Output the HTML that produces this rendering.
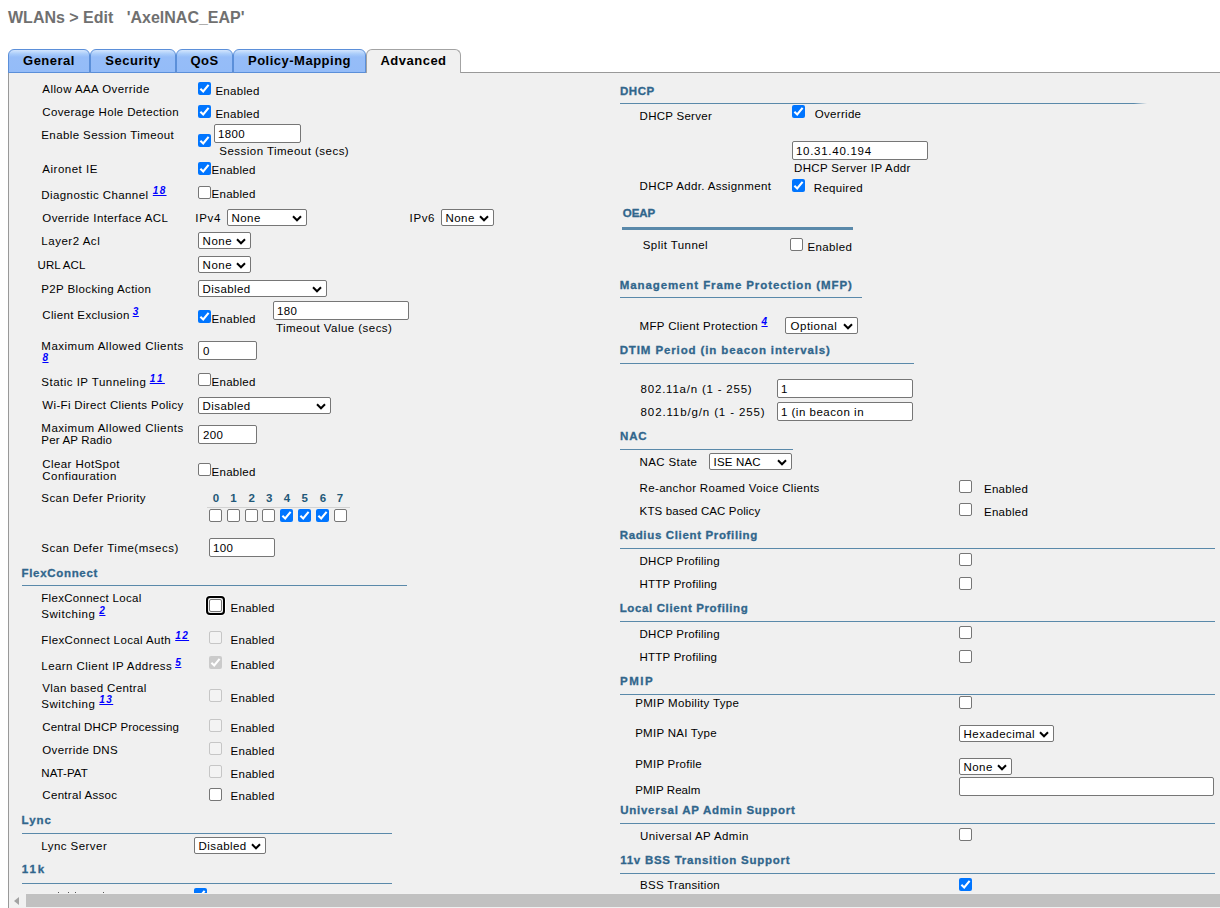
<!DOCTYPE html>
<html><head><meta charset="utf-8"><title>WLANs &gt; Edit</title>
<style>
html,body{margin:0;padding:0;background:#fff;}
body{width:1220px;height:908px;overflow:hidden;position:relative;font-family:"Liberation Sans",sans-serif;}
.t{position:absolute;white-space:nowrap;line-height:14px;font-family:"Liberation Sans",sans-serif}
.tab{position:absolute;top:49px;height:22px;border:1px solid #5b8fd9;border-top-left-radius:6px;border-top-right-radius:6px;
 background:linear-gradient(#d3e5fd 0px,#a9ccfa 4px,#96bdf8 7px,#94bcf8 100%);text-align:center;line-height:22px;
 font-family:"Liberation Sans",sans-serif;font-size:13px;font-weight:bold;letter-spacing:0.5px;color:#000;box-sizing:content-box}
.tab.act{background:#f0f0f0;border-color:#a3a3a3;border-bottom:none;height:23px;z-index:3}
#content{position:absolute;left:8px;top:72px;width:1212px;height:836px;background:#f0f0f0;border-left:1px solid #999;border-top:1px solid #999;box-sizing:border-box;overflow:hidden}
.cb{position:absolute;width:13px;height:13px;box-sizing:border-box;border-radius:2px}
.cb svg{position:absolute;left:0;top:0}
.cbc{background:#0075ff;}
.cbu{background:#fff;border:1px solid #767676}
.cbd{background:#f3f3f3;border:1px solid #c6c6c6}
.cbdc{background:#cbcbcb}
.ring{position:absolute;width:19px;height:19px;box-sizing:border-box;border:2px solid #000;border-radius:4px;box-shadow:0 0 0 1px #fff}
.sel,.inp{position:absolute;background:#fff;border:1px solid #767676;border-radius:2px}
.st{position:absolute;white-space:nowrap;line-height:14px;font-family:"Liberation Sans",sans-serif;font-size:11.5px;color:#000}
.chev{position:absolute;right:4px;width:10px;height:7px}
.chev svg{display:block}
.ln{position:absolute}
#sb{position:absolute;left:9px;top:893px;width:1211px;height:15px;background:#f1f1f1}
#thumb{position:absolute;left:17px;top:1px;width:1194px;height:13px;background:#c1c1c1}
</style></head><body>
<div id="content"></div>
<div class="tab" style="left:8px;width:80px">General</div>
<div class="tab" style="left:90px;width:84px">Security</div>
<div class="tab" style="left:176px;width:55px">QoS</div>
<div class="tab" style="left:233px;width:131px">Policy-Mapping</div>
<div class="tab act" style="left:366px;width:93px">Advanced</div>
<div class="t" style="left:8.00px;top:11px;font-size:16px;font-weight:bold;color:#707070;letter-spacing:0.000px">WLANs &gt; Edit &nbsp;&nbsp;'AxelNAC_EAP'</div>
<div class="t" style="left:42.30px;top:82px;font-size:11.5px;color:#000;letter-spacing:0.429px">Allow AAA Override</div>
<div class="t" style="left:215.40px;top:84px;font-size:11.5px;color:#000;letter-spacing:0.283px">Enabled</div>
<div class="t" style="left:42.30px;top:105px;font-size:11.5px;color:#000;letter-spacing:0.355px">Coverage Hole Detection</div>
<div class="t" style="left:215.40px;top:107px;font-size:11.5px;color:#000;letter-spacing:0.283px">Enabled</div>
<div class="t" style="left:41.30px;top:128px;font-size:11.5px;color:#000;letter-spacing:0.400px">Enable Session Timeout</div>
<div class="t" style="left:219.30px;top:144px;font-size:11.5px;color:#000;letter-spacing:0.471px">Session Timeout (secs)</div>
<div class="t" style="left:42.30px;top:162px;font-size:11.5px;color:#000;letter-spacing:0.511px">Aironet IE</div>
<div class="t" style="left:211.50px;top:163px;font-size:11.5px;color:#000;letter-spacing:0.283px">Enabled</div>
<div class="t" style="left:41.30px;top:188px;font-size:11.5px;color:#000;letter-spacing:0.412px">Diagnostic Channel</div>
<div class="t" style="left:152.80px;top:184px;font-size:10px;font-weight:bold;font-style:italic;text-decoration:underline;color:#0000ff;letter-spacing:1.300px">18</div>
<div class="t" style="left:211.50px;top:187px;font-size:11.5px;color:#000;letter-spacing:0.283px">Enabled</div>
<div class="t" style="left:42.30px;top:211px;font-size:11.5px;color:#000;letter-spacing:0.410px">Override Interface ACL</div>
<div class="t" style="left:195.30px;top:211px;font-size:11.5px;color:#000;letter-spacing:0.700px">IPv4</div>
<div class="t" style="left:409.60px;top:211px;font-size:11.5px;color:#000;letter-spacing:0.633px">IPv6</div>
<div class="t" style="left:41.30px;top:234px;font-size:11.5px;color:#000;letter-spacing:0.522px">Layer2 Acl</div>
<div class="t" style="left:37.60px;top:258px;font-size:11.5px;color:#000;letter-spacing:0.033px">URL ACL</div>
<div class="t" style="left:41.30px;top:282px;font-size:11.5px;color:#000;letter-spacing:0.378px">P2P Blocking Action</div>
<div class="t" style="left:42.30px;top:308px;font-size:11.5px;color:#000;letter-spacing:0.353px">Client Exclusion</div>
<div class="t" style="left:132.70px;top:305px;font-size:10px;font-weight:bold;font-style:italic;text-decoration:underline;color:#0000ff;letter-spacing:0.600px">3</div>
<div class="t" style="left:211.60px;top:312px;font-size:11.5px;color:#000;letter-spacing:0.283px">Enabled</div>
<div class="t" style="left:275.90px;top:321px;font-size:11.5px;color:#000;letter-spacing:0.453px">Timeout Value (secs)</div>
<div class="t" style="left:41.30px;top:339px;font-size:11.5px;color:#000;letter-spacing:0.500px">Maximum Allowed Clients</div>
<div class="t" style="left:42.40px;top:351px;font-size:10px;font-weight:bold;font-style:italic;text-decoration:underline;color:#0000ff;letter-spacing:0.600px">8</div>
<div class="t" style="left:41.30px;top:375px;font-size:11.5px;color:#000;letter-spacing:0.489px">Static IP Tunneling</div>
<div class="t" style="left:149.70px;top:372px;font-size:10px;font-weight:bold;font-style:italic;text-decoration:underline;color:#0000ff;letter-spacing:2.400px">11</div>
<div class="t" style="left:211.50px;top:375px;font-size:11.5px;color:#000;letter-spacing:0.283px">Enabled</div>
<div class="t" style="left:42.30px;top:398px;font-size:11.5px;color:#000;letter-spacing:0.338px">Wi-Fi Direct Clients Policy</div>
<div class="t" style="left:41.30px;top:421px;font-size:11.5px;color:#000;letter-spacing:0.500px">Maximum Allowed Clients</div>
<div class="t" style="left:41.30px;top:433px;font-size:11.5px;color:#000;letter-spacing:0.164px">Per AP Radio</div>
<div class="t" style="left:42.30px;top:457px;font-size:11.5px;color:#000;letter-spacing:0.408px">Clear HotSpot</div>
<div style="position:absolute;left:0;top:466px;width:400px;height:14px;overflow:hidden"><div class="t" style="left:42.30px;top:3px;font-size:11.5px;color:#000;letter-spacing:0.467px">Configuration</div></div>
<div class="t" style="left:211.50px;top:465px;font-size:11.5px;color:#000;letter-spacing:0.283px">Enabled</div>
<div class="t" style="left:41.30px;top:491px;font-size:11.5px;color:#000;letter-spacing:0.433px">Scan Defer Priority</div>
<div class="t" style="left:41.30px;top:541px;font-size:11.5px;color:#000;letter-spacing:0.495px">Scan Defer Time(msecs)</div>
<div class="t" style="left:21.50px;top:566px;font-size:11.5px;font-weight:bold;color:#31668c;-webkit-text-stroke:0.3px #31668c;letter-spacing:0.680px">FlexConnect</div>
<div class="t" style="left:41.30px;top:591px;font-size:11.5px;color:#000;letter-spacing:0.294px">FlexConnect Local</div>
<div class="t" style="left:41.30px;top:607px;font-size:11.5px;color:#000;letter-spacing:0.537px">Switching</div>
<div class="t" style="left:99.30px;top:604px;font-size:10px;font-weight:bold;font-style:italic;text-decoration:underline;color:#0000ff;letter-spacing:0.600px">2</div>
<div class="t" style="left:230.50px;top:601px;font-size:11.5px;color:#000;letter-spacing:0.283px">Enabled</div>
<div class="t" style="left:41.30px;top:633px;font-size:11.5px;color:#000;letter-spacing:0.381px">FlexConnect Local Auth</div>
<div class="t" style="left:175.20px;top:629px;font-size:10px;font-weight:bold;font-style:italic;text-decoration:underline;color:#0000ff;letter-spacing:1.400px">12</div>
<div class="t" style="left:230.50px;top:633px;font-size:11.5px;color:#000;letter-spacing:0.283px">Enabled</div>
<div class="t" style="left:41.30px;top:659px;font-size:11.5px;color:#000;letter-spacing:0.445px">Learn Client IP Address</div>
<div class="t" style="left:175.20px;top:656px;font-size:10px;font-weight:bold;font-style:italic;text-decoration:underline;color:#0000ff;letter-spacing:0.600px">5</div>
<div class="t" style="left:230.50px;top:658px;font-size:11.5px;color:#000;letter-spacing:0.283px">Enabled</div>
<div class="t" style="left:42.30px;top:681px;font-size:11.5px;color:#000;letter-spacing:0.365px">Vlan based Central</div>
<div class="t" style="left:41.30px;top:697px;font-size:11.5px;color:#000;letter-spacing:0.537px">Switching</div>
<div class="t" style="left:99.30px;top:693px;font-size:10px;font-weight:bold;font-style:italic;text-decoration:underline;color:#0000ff;letter-spacing:1.400px">13</div>
<div class="t" style="left:230.50px;top:691px;font-size:11.5px;color:#000;letter-spacing:0.283px">Enabled</div>
<div class="t" style="left:42.30px;top:720px;font-size:11.5px;color:#000;letter-spacing:0.177px">Central DHCP Processing</div>
<div class="t" style="left:230.50px;top:721px;font-size:11.5px;color:#000;letter-spacing:0.283px">Enabled</div>
<div class="t" style="left:42.30px;top:743px;font-size:11.5px;color:#000;letter-spacing:0.345px">Override DNS</div>
<div class="t" style="left:230.50px;top:744px;font-size:11.5px;color:#000;letter-spacing:0.283px">Enabled</div>
<div class="t" style="left:41.30px;top:766px;font-size:11.5px;color:#000;letter-spacing:0.067px">NAT-PAT</div>
<div class="t" style="left:230.50px;top:767px;font-size:11.5px;color:#000;letter-spacing:0.283px">Enabled</div>
<div class="t" style="left:42.30px;top:788px;font-size:11.5px;color:#000;letter-spacing:0.317px">Central Assoc</div>
<div class="t" style="left:230.50px;top:789px;font-size:11.5px;color:#000;letter-spacing:0.283px">Enabled</div>
<div class="t" style="left:21.50px;top:813px;font-size:11.5px;font-weight:bold;color:#31668c;-webkit-text-stroke:0.3px #31668c;letter-spacing:1.033px">Lync</div>
<div class="t" style="left:41.30px;top:839px;font-size:11.5px;color:#000;letter-spacing:0.450px">Lync Server</div>
<div class="t" style="left:21.80px;top:862px;font-size:11.5px;font-weight:bold;color:#31668c;-webkit-text-stroke:0.3px #31668c;letter-spacing:1.900px">11k</div>
<div class="t" style="left:620.10px;top:84px;font-size:11.5px;font-weight:bold;color:#31668c;-webkit-text-stroke:0.3px #31668c;letter-spacing:0.467px">DHCP</div>
<div class="t" style="left:639.60px;top:109px;font-size:11.5px;color:#000;letter-spacing:0.270px">DHCP Server</div>
<div class="t" style="left:814.80px;top:107px;font-size:11.5px;color:#000;letter-spacing:0.300px">Override</div>
<div class="t" style="left:794.00px;top:161px;font-size:11.5px;color:#000;letter-spacing:0.350px">DHCP Server IP Addr</div>
<div class="t" style="left:639.60px;top:179px;font-size:11.5px;color:#000;letter-spacing:0.340px">DHCP Addr. Assignment</div>
<div class="t" style="left:813.80px;top:181px;font-size:11.5px;color:#000;letter-spacing:0.300px">Required</div>
<div class="t" style="left:622.80px;top:206px;font-size:11.5px;font-weight:bold;color:#31668c;-webkit-text-stroke:0.3px #31668c;letter-spacing:-0.067px">OEAP</div>
<div class="t" style="left:642.70px;top:238px;font-size:11.5px;color:#000;letter-spacing:0.445px">Split Tunnel</div>
<div class="t" style="left:807.60px;top:240px;font-size:11.5px;color:#000;letter-spacing:0.350px">Enabled</div>
<div class="t" style="left:619.70px;top:278px;font-size:11.5px;font-weight:bold;color:#31668c;-webkit-text-stroke:0.3px #31668c;letter-spacing:0.906px">Management Frame Protection (MFP)</div>
<div class="t" style="left:639.60px;top:319px;font-size:11.5px;color:#000;letter-spacing:0.320px">MFP Client Protection</div>
<div class="t" style="left:761.50px;top:315px;font-size:10px;font-weight:bold;font-style:italic;text-decoration:underline;color:#0000ff;letter-spacing:0.600px">4</div>
<div class="t" style="left:619.70px;top:343px;font-size:11.5px;font-weight:bold;color:#31668c;-webkit-text-stroke:0.3px #31668c;letter-spacing:0.878px">DTIM Period (in beacon intervals)</div>
<div class="t" style="left:640.60px;top:382px;font-size:11.5px;color:#000;letter-spacing:0.783px">802.11a/n (1 - 255)</div>
<div class="t" style="left:640.60px;top:405px;font-size:11.5px;color:#000;letter-spacing:0.870px">802.11b/g/n (1 - 255)</div>
<div class="t" style="left:620.10px;top:429px;font-size:11.5px;font-weight:bold;color:#31668c;-webkit-text-stroke:0.3px #31668c;letter-spacing:0.800px">NAC</div>
<div class="t" style="left:639.60px;top:455px;font-size:11.5px;color:#000;letter-spacing:0.375px">NAC State</div>
<div class="t" style="left:639.60px;top:481px;font-size:11.5px;color:#000;letter-spacing:0.334px">Re-anchor Roamed Voice Clients</div>
<div class="t" style="left:984.00px;top:482px;font-size:11.5px;color:#000;letter-spacing:0.267px">Enabled</div>
<div class="t" style="left:639.60px;top:504px;font-size:11.5px;color:#000;letter-spacing:0.121px">KTS based CAC Policy</div>
<div class="t" style="left:984.00px;top:505px;font-size:11.5px;color:#000;letter-spacing:0.267px">Enabled</div>
<div class="t" style="left:619.70px;top:528px;font-size:11.5px;font-weight:bold;color:#31668c;-webkit-text-stroke:0.3px #31668c;letter-spacing:0.650px">Radius Client Profiling</div>
<div class="t" style="left:639.60px;top:554px;font-size:11.5px;color:#000;letter-spacing:0.223px">DHCP Profiling</div>
<div class="t" style="left:639.60px;top:577px;font-size:11.5px;color:#000;letter-spacing:0.215px">HTTP Profiling</div>
<div class="t" style="left:619.70px;top:601px;font-size:11.5px;font-weight:bold;color:#31668c;-webkit-text-stroke:0.3px #31668c;letter-spacing:0.624px">Local Client Profiling</div>
<div class="t" style="left:639.60px;top:627px;font-size:11.5px;color:#000;letter-spacing:0.223px">DHCP Profiling</div>
<div class="t" style="left:639.60px;top:650px;font-size:11.5px;color:#000;letter-spacing:0.215px">HTTP Profiling</div>
<div class="t" style="left:620.00px;top:674px;font-size:11.5px;font-weight:bold;color:#31668c;-webkit-text-stroke:0.3px #31668c;letter-spacing:1.500px">PMIP</div>
<div class="t" style="left:635.20px;top:696px;font-size:11.5px;color:#000;letter-spacing:0.341px">PMIP Mobility Type</div>
<div class="t" style="left:635.20px;top:726px;font-size:11.5px;color:#000;letter-spacing:0.267px">PMIP NAI Type</div>
<div class="t" style="left:635.20px;top:757px;font-size:11.5px;color:#000;letter-spacing:0.255px">PMIP Profile</div>
<div class="t" style="left:635.20px;top:783px;font-size:11.5px;color:#000;letter-spacing:0.089px">PMIP Realm</div>
<div class="t" style="left:620.20px;top:803px;font-size:11.5px;font-weight:bold;color:#31668c;-webkit-text-stroke:0.3px #31668c;letter-spacing:0.744px">Universal AP Admin Support</div>
<div class="t" style="left:640.00px;top:829px;font-size:11.5px;color:#000;letter-spacing:0.441px">Universal AP Admin</div>
<div class="t" style="left:620.20px;top:853px;font-size:11.5px;font-weight:bold;color:#31668c;-webkit-text-stroke:0.3px #31668c;letter-spacing:0.740px">11v BSS Transition Support</div>
<div class="t" style="left:640.00px;top:878px;font-size:11.5px;color:#000;letter-spacing:0.285px">BSS Transition</div>
<div class="cb cbc" style="left:198px;top:82px"><svg width="13" height="13" viewBox="0 0 13 13"><path d="M2.4 6.7 L5.2 9.4 L10.6 2.8" fill="none" stroke="#fff" stroke-width="2.1"/></svg></div>
<div class="cb cbc" style="left:198px;top:105px"><svg width="13" height="13" viewBox="0 0 13 13"><path d="M2.4 6.7 L5.2 9.4 L10.6 2.8" fill="none" stroke="#fff" stroke-width="2.1"/></svg></div>
<div class="cb cbc" style="left:198px;top:134px"><svg width="13" height="13" viewBox="0 0 13 13"><path d="M2.4 6.7 L5.2 9.4 L10.6 2.8" fill="none" stroke="#fff" stroke-width="2.1"/></svg></div>
<div class="cb cbc" style="left:198px;top:162px"><svg width="13" height="13" viewBox="0 0 13 13"><path d="M2.4 6.7 L5.2 9.4 L10.6 2.8" fill="none" stroke="#fff" stroke-width="2.1"/></svg></div>
<div class="cb cbu" style="left:198px;top:186px"></div>
<div class="cb cbc" style="left:198px;top:310px"><svg width="13" height="13" viewBox="0 0 13 13"><path d="M2.4 6.7 L5.2 9.4 L10.6 2.8" fill="none" stroke="#fff" stroke-width="2.1"/></svg></div>
<div class="cb cbu" style="left:198px;top:373px"></div>
<div class="cb cbu" style="left:198px;top:463px"></div>
<div class="cb cbu" style="left:209px;top:509px"></div>
<div class="cb cbu" style="left:227px;top:509px"></div>
<div class="cb cbu" style="left:245px;top:509px"></div>
<div class="cb cbu" style="left:262px;top:509px"></div>
<div class="cb cbc" style="left:280px;top:509px"><svg width="13" height="13" viewBox="0 0 13 13"><path d="M2.4 6.7 L5.2 9.4 L10.6 2.8" fill="none" stroke="#fff" stroke-width="2.1"/></svg></div>
<div class="cb cbc" style="left:298px;top:509px"><svg width="13" height="13" viewBox="0 0 13 13"><path d="M2.4 6.7 L5.2 9.4 L10.6 2.8" fill="none" stroke="#fff" stroke-width="2.1"/></svg></div>
<div class="cb cbc" style="left:316px;top:509px"><svg width="13" height="13" viewBox="0 0 13 13"><path d="M2.4 6.7 L5.2 9.4 L10.6 2.8" fill="none" stroke="#fff" stroke-width="2.1"/></svg></div>
<div class="cb cbu" style="left:334px;top:509px"></div>
<div class="ring" style="left:206px;top:596px"></div>
<div class="cb cbu" style="left:209px;top:599px"></div>
<div class="cb cbd" style="left:209px;top:631px"></div>
<div class="cb cbdc" style="left:209px;top:656px"><svg width="13" height="13" viewBox="0 0 13 13"><path d="M2.4 6.7 L5.2 9.4 L10.6 2.8" fill="none" stroke="#fff" stroke-width="2.1"/></svg></div>
<div class="cb cbd" style="left:209px;top:689px"></div>
<div class="cb cbd" style="left:209px;top:719px"></div>
<div class="cb cbd" style="left:209px;top:742px"></div>
<div class="cb cbd" style="left:209px;top:765px"></div>
<div class="cb cbu" style="left:209px;top:788px"></div>
<div class="cb cbc" style="left:194px;top:888px"><svg width="13" height="13" viewBox="0 0 13 13"><path d="M2.4 6.7 L5.2 9.4 L10.6 2.8" fill="none" stroke="#fff" stroke-width="2.1"/></svg></div>
<div class="cb cbc" style="left:792px;top:105px"><svg width="13" height="13" viewBox="0 0 13 13"><path d="M2.4 6.7 L5.2 9.4 L10.6 2.8" fill="none" stroke="#fff" stroke-width="2.1"/></svg></div>
<div class="cb cbc" style="left:792px;top:179px"><svg width="13" height="13" viewBox="0 0 13 13"><path d="M2.4 6.7 L5.2 9.4 L10.6 2.8" fill="none" stroke="#fff" stroke-width="2.1"/></svg></div>
<div class="cb cbu" style="left:790px;top:238px"></div>
<div class="cb cbu" style="left:959px;top:480px"></div>
<div class="cb cbu" style="left:959px;top:503px"></div>
<div class="cb cbu" style="left:959px;top:553px"></div>
<div class="cb cbu" style="left:959px;top:577px"></div>
<div class="cb cbu" style="left:959px;top:626px"></div>
<div class="cb cbu" style="left:959px;top:650px"></div>
<div class="cb cbu" style="left:959px;top:696px"></div>
<div class="cb cbu" style="left:959px;top:828px"></div>
<div class="cb cbc" style="left:959px;top:878px"><svg width="13" height="13" viewBox="0 0 13 13"><path d="M2.4 6.7 L5.2 9.4 L10.6 2.8" fill="none" stroke="#fff" stroke-width="2.1"/></svg></div>
<div class="sel" style="left:227px;top:209px;width:78px;height:15px"><div class="st" style="left:3.60px;top:1px;letter-spacing:0.400px">None</div><div class="chev" style="top:4.5px"><svg width="10" height="7" viewBox="0 0 10 7"><path d="M1 1.3 L5 5.3 L9 1.3" fill="none" stroke="#000" stroke-width="2"/></svg></div></div>
<div class="sel" style="left:441px;top:209px;width:51px;height:15px"><div class="st" style="left:3.60px;top:1px;letter-spacing:0.400px">None</div><div class="chev" style="top:4.5px"><svg width="10" height="7" viewBox="0 0 10 7"><path d="M1 1.3 L5 5.3 L9 1.3" fill="none" stroke="#000" stroke-width="2"/></svg></div></div>
<div class="sel" style="left:198px;top:232px;width:51px;height:15px"><div class="st" style="left:3.60px;top:1px;letter-spacing:0.533px">None</div><div class="chev" style="top:4.5px"><svg width="10" height="7" viewBox="0 0 10 7"><path d="M1 1.3 L5 5.3 L9 1.3" fill="none" stroke="#000" stroke-width="2"/></svg></div></div>
<div class="sel" style="left:198px;top:256px;width:51px;height:15px"><div class="st" style="left:3.60px;top:1px;letter-spacing:0.533px">None</div><div class="chev" style="top:4.5px"><svg width="10" height="7" viewBox="0 0 10 7"><path d="M1 1.3 L5 5.3 L9 1.3" fill="none" stroke="#000" stroke-width="2"/></svg></div></div>
<div class="sel" style="left:198px;top:280px;width:127px;height:15px"><div class="st" style="left:3.60px;top:1px;letter-spacing:0.400px">Disabled</div><div class="chev" style="top:4.5px"><svg width="10" height="7" viewBox="0 0 10 7"><path d="M1 1.3 L5 5.3 L9 1.3" fill="none" stroke="#000" stroke-width="2"/></svg></div></div>
<div class="sel" style="left:198px;top:397px;width:131px;height:15px"><div class="st" style="left:3.60px;top:1px;letter-spacing:0.400px">Disabled</div><div class="chev" style="top:4.5px"><svg width="10" height="7" viewBox="0 0 10 7"><path d="M1 1.3 L5 5.3 L9 1.3" fill="none" stroke="#000" stroke-width="2"/></svg></div></div>
<div class="sel" style="left:194px;top:837px;width:70px;height:15px"><div class="st" style="left:3.60px;top:1px;letter-spacing:0.400px">Disabled</div><div class="chev" style="top:4.5px"><svg width="10" height="7" viewBox="0 0 10 7"><path d="M1 1.3 L5 5.3 L9 1.3" fill="none" stroke="#000" stroke-width="2"/></svg></div></div>
<div class="sel" style="left:785px;top:317px;width:71px;height:15px"><div class="st" style="left:4.60px;top:1px;letter-spacing:0.471px">Optional</div><div class="chev" style="top:4.5px"><svg width="10" height="7" viewBox="0 0 10 7"><path d="M1 1.3 L5 5.3 L9 1.3" fill="none" stroke="#000" stroke-width="2"/></svg></div></div>
<div class="sel" style="left:709px;top:453px;width:81px;height:15px"><div class="st" style="left:3.60px;top:1px;letter-spacing:0.150px">ISE NAC</div><div class="chev" style="top:4.5px"><svg width="10" height="7" viewBox="0 0 10 7"><path d="M1 1.3 L5 5.3 L9 1.3" fill="none" stroke="#000" stroke-width="2"/></svg></div></div>
<div class="sel" style="left:959px;top:725px;width:93px;height:15px"><div class="st" style="left:3.60px;top:1px;letter-spacing:0.460px">Hexadecimal</div><div class="chev" style="top:4.5px"><svg width="10" height="7" viewBox="0 0 10 7"><path d="M1 1.3 L5 5.3 L9 1.3" fill="none" stroke="#000" stroke-width="2"/></svg></div></div>
<div class="sel" style="left:959px;top:758px;width:51px;height:15px"><div class="st" style="left:3.60px;top:1px;letter-spacing:0.400px">None</div><div class="chev" style="top:4.5px"><svg width="10" height="7" viewBox="0 0 10 7"><path d="M1 1.3 L5 5.3 L9 1.3" fill="none" stroke="#000" stroke-width="2"/></svg></div></div>
<div class="inp" style="left:214px;top:124px;width:85px;height:17px"><div class="st" style="left:2.90px;top:2px;letter-spacing:0.400px">1800</div></div>
<div class="inp" style="left:273px;top:301px;width:134px;height:17px"><div class="st" style="left:2.90px;top:2px;letter-spacing:0.400px">180</div></div>
<div class="inp" style="left:198px;top:341px;width:57px;height:17px"><div class="st" style="left:3.90px;top:2px;letter-spacing:0.400px">0</div></div>
<div class="inp" style="left:198px;top:425px;width:57px;height:17px"><div class="st" style="left:3.90px;top:2px;letter-spacing:0.400px">200</div></div>
<div class="inp" style="left:209px;top:538px;width:64px;height:17px"><div class="st" style="left:2.90px;top:2px;letter-spacing:0.400px">100</div></div>
<div class="inp" style="left:792px;top:141px;width:134px;height:17px"><div class="st" style="left:2.90px;top:2px;letter-spacing:0.736px">10.31.40.194</div></div>
<div class="inp" style="left:777px;top:379px;width:134px;height:17px"><div class="st" style="left:2.90px;top:2px;letter-spacing:0.400px">1</div></div>
<div class="inp" style="left:777px;top:402px;width:134px;height:17px"><div class="st" style="left:2.90px;top:2px;letter-spacing:0.514px">1 (in beacon in</div></div>
<div class="inp" style="left:959px;top:777px;width:253px;height:17px"><div class="st" style="left:3.90px;top:2px;letter-spacing:0.400px"></div></div>
<div class="ln" style="left:207px;top:507px;width:143px;height:1px;background:#d2d2d2"></div>
<div class="ln" style="left:22px;top:585px;width:385px;height:1px;background:#5a89aa"></div>
<div class="ln" style="left:22px;top:833px;width:370px;height:1px;background:#5a89aa"></div>
<div class="ln" style="left:22px;top:883px;width:370px;height:1px;background:#5a89aa"></div>
<div class="ln" style="left:622px;top:227px;width:231px;height:3px;background:#5a89aa"></div>
<div class="ln" style="left:620px;top:297px;width:242px;height:1px;background:#5a89aa"></div>
<div class="ln" style="left:620px;top:363px;width:294px;height:1px;background:#5a89aa"></div>
<div class="ln" style="left:620px;top:449px;width:173px;height:1px;background:#5a89aa"></div>
<div class="ln" style="left:620px;top:548px;width:595px;height:1px;background:#5a89aa"></div>
<div class="ln" style="left:620px;top:621px;width:595px;height:1px;background:#5a89aa"></div>
<div class="ln" style="left:620px;top:694px;width:595px;height:1px;background:#5a89aa"></div>
<div class="ln" style="left:620px;top:823px;width:595px;height:1px;background:#5a89aa"></div>
<div class="ln" style="left:620px;top:873px;width:595px;height:1px;background:#5a89aa"></div>
<div class="t" style="left:206px;width:20px;text-align:center;top:491px;font-size:11.5px;font-weight:bold;color:#1f5878">0</div>
<div class="t" style="left:223.5px;width:20px;text-align:center;top:491px;font-size:11.5px;font-weight:bold;color:#1f5878">1</div>
<div class="t" style="left:241.7px;width:20px;text-align:center;top:491px;font-size:11.5px;font-weight:bold;color:#1f5878">2</div>
<div class="t" style="left:259.3px;width:20px;text-align:center;top:491px;font-size:11.5px;font-weight:bold;color:#1f5878">3</div>
<div class="t" style="left:277px;width:20px;text-align:center;top:491px;font-size:11.5px;font-weight:bold;color:#1f5878">4</div>
<div class="t" style="left:294.6px;width:20px;text-align:center;top:491px;font-size:11.5px;font-weight:bold;color:#1f5878">5</div>
<div class="t" style="left:312.9px;width:20px;text-align:center;top:491px;font-size:11.5px;font-weight:bold;color:#1f5878">6</div>
<div class="t" style="left:330px;width:20px;text-align:center;top:491px;font-size:11.5px;font-weight:bold;color:#1f5878">7</div>
<div class="ln" style="left:620px;top:103px;width:527px;height:1px;background:linear-gradient(90deg,#5a89aa 0,#5a89aa 97.5%,rgba(90,137,170,0) 100%)"></div>
<div class="ln" style="left:58px;top:892px;width:1px;height:1px;background:#555"></div>
<div class="ln" style="left:68px;top:892px;width:1px;height:1px;background:#555"></div>
<div class="ln" style="left:75px;top:892px;width:1px;height:1px;background:#555"></div>
<div class="ln" style="left:103px;top:892px;width:1px;height:1px;background:#555"></div>
<div id="sb"><div id="thumb"></div><svg style="position:absolute;left:5px;top:4px" width="6" height="8" viewBox="0 0 6 8"><path d="M5 0 L5 8 L0 4 Z" fill="#a3a3a3"/></svg></div>
</body></html>
